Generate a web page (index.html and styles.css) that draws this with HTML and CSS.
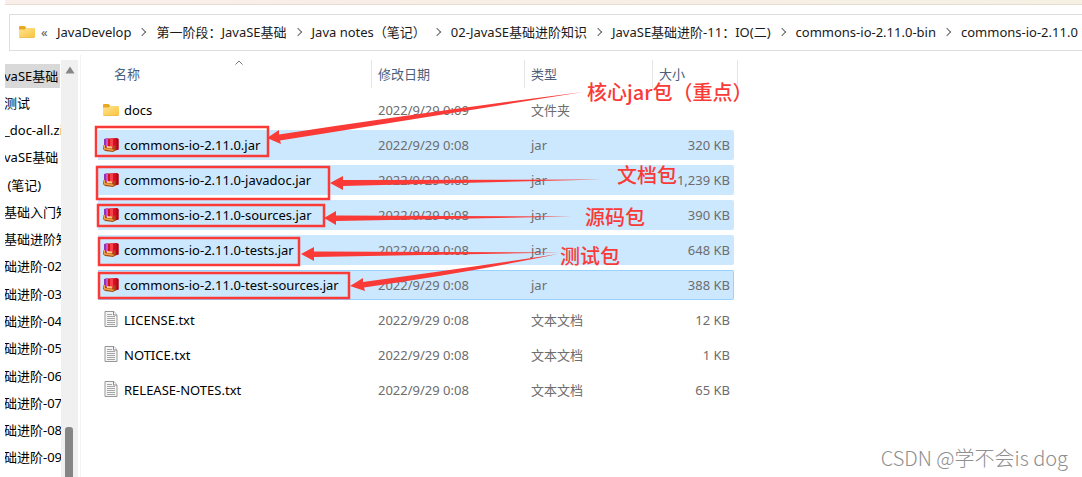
FILE: index.html
```html
<!DOCTYPE html>
<html lang="zh-CN">

<head>
    <meta charset="UTF-8">
    <meta name="viewport" content="width=device-width, initial-scale=1.0">
    <title>commons-io-2.11.0</title>
    <link rel="stylesheet" href="styles.css">
</head>

<body>
    <!-- icons -->
    <svg class="defs" width="0" height="0">
        <defs>
            <linearGradient id="gold" x1="0" y1="0" x2="1" y2="1">
                <stop offset="0" stop-color="#ffe394" />
                <stop offset="1" stop-color="#fbc53c" />
            </linearGradient>
        </defs>
        <symbol id="folder" viewBox="0 0 16 14">
            <path d="M1 1h4.500l2 2H15v3H0V2q0-1 1-1z" fill="#e9a820" />
            <path d="M0 4.500h5.500L7 3h8q1 0 1 1v7.500q0 1-1 1H1q-1 0-1-1z" fill="url(#gold)" />
            <path d="M.5 12.500h15" stroke="#e5ad32" stroke-width=".7" />
        </symbol>
        <symbol id="jar" viewBox="0 0 16 14">
            <path d="M1 1l4-1v10H1z" fill="#8d35b5" />
            <path d="M3 .5L5 0v10H3z" fill="#c558cf" />
            <path d="M5 .5L14 0v12l-9-1z" fill="#d01422" />
            <path d="M7 .5h3V10H7z" fill="#f7404b" />
            <path d="M11 1l3-1 1.500 1v10.500L11 13z" fill="#d90d20" />
            <path d="M13.500 .5l2 .5v10.500L13.500 12z" fill="#a00b18" />
            <path d="M0 7h3v2l7 1V7.500h2.500v5L10 14l-8-1-2-2z" fill="#a94b13" />
            <path d="M0 7h2v3l8.500 1.500V13L1 11.500z" fill="#efa049" />
            <path d="M4 8l5 .5v2L4 10z" fill="#f8cb80" />
        </symbol>
        <symbol id="txt" viewBox="0 0 14 16">
            <path d="M1 .5h9L13 4v11.500H1z" fill="#f5f5f5" stroke="#979797" />
            <path d="M9.500 .5V4H13" fill="#fff" stroke="#888" />
            <path d="M3 3.500h5M3 5.500h8M3 7.500h8M3 9.500h8M3 11.500h8M3 13.500h8" stroke="#a6a6a6" />
        </symbol>
    </svg>

    <div class="topline"></div>
    <nav class="address">
        <svg class="folder"><use href="#folder" /></svg>
        <span class="more">«</span>
        <a href="#">JavaDevelop</a>
        <a href="#">第一阶段：JavaSE基础</a>
        <a href="#">Java notes（笔记）</a>
        <a href="#">02-JavaSE基础进阶知识</a>
        <a href="#">JavaSE基础进阶-11：IO(二)</a>
        <a href="#">commons-io-2.11.0-bin</a>
        <a href="#">commons-io-2.11.0</a>
    </nav>

    <div class="main">
        <ul class="tree">
            <li><a class="active" href="#">vaSE基础</a></li>
            <li><a href="#">测试</a></li>
            <li><a href="#">_doc-all.zip</a></li>
            <li><a href="#">vaSE基础</a></li>
            <li><a href="#">&nbsp;(笔记)</a></li>
            <li><a href="#">基础入门知识</a></li>
            <li><a href="#">基础进阶知识</a></li>
            <li><a href="#">础进阶-02</a></li>
            <li><a href="#">础进阶-03</a></li>
            <li><a href="#">础进阶-04</a></li>
            <li><a href="#">础进阶-05</a></li>
            <li><a href="#">础进阶-06</a></li>
            <li><a href="#">础进阶-07</a></li>
            <li><a href="#">础进阶-08</a></li>
            <li><a href="#">础进阶-09</a></li>
        </ul>
        <div class="scroll">
            <svg class="up" viewBox="0 0 10 8"><path d="M5 .5L9.500 7.500H.5z" fill="#868686" /></svg>
            <div class="thumb"></div>
        </div>

        <div class="files">
            <table>
                <thead>
                    <tr>
                        <th class="name">名称<svg class="sort" viewBox="0 0 8 5"><path d="M.5 4.500L4 1l3.500 3.500" fill="none" stroke="#777" /></svg></th>
                        <th class="date">修改日期</th>
                        <th class="type">类型</th>
                        <th class="size">大小</th>
                    </tr>
                </thead>
                <tbody>
                    <tr>
                        <td class="name"><svg class="folder"><use href="#folder" /></svg>docs</td>
                        <td>2022/9/29 0:09</td>
                        <td>文件夹</td>
                        <td class="size"></td>
                    </tr>
                    <tr class="selected">
                        <td class="name"><svg class="jar"><use href="#jar" /></svg>commons-io-2.11.0.jar</td>
                        <td>2022/9/29 0:08</td>
                        <td>jar</td>
                        <td class="size">320 KB</td>
                    </tr>
                    <tr class="selected">
                        <td class="name"><svg class="jar"><use href="#jar" /></svg>commons-io-2.11.0-javadoc.jar</td>
                        <td>2022/9/29 0:08</td>
                        <td>jar</td>
                        <td class="size">1,239 KB</td>
                    </tr>
                    <tr class="selected">
                        <td class="name"><svg class="jar"><use href="#jar" /></svg>commons-io-2.11.0-sources.jar</td>
                        <td>2022/9/29 0:08</td>
                        <td>jar</td>
                        <td class="size">390 KB</td>
                    </tr>
                    <tr class="selected">
                        <td class="name"><svg class="jar"><use href="#jar" /></svg>commons-io-2.11.0-tests.jar</td>
                        <td>2022/9/29 0:08</td>
                        <td>jar</td>
                        <td class="size">648 KB</td>
                    </tr>
                    <tr class="selected focus">
                        <td class="name"><svg class="jar"><use href="#jar" /></svg>commons-io-2.11.0-test-sources.jar</td>
                        <td>2022/9/29 0:08</td>
                        <td>jar</td>
                        <td class="size">388 KB</td>
                    </tr>
                    <tr>
                        <td class="name"><svg class="txt"><use href="#txt" /></svg>LICENSE.txt</td>
                        <td>2022/9/29 0:08</td>
                        <td>文本文档</td>
                        <td class="size">12 KB</td>
                    </tr>
                    <tr>
                        <td class="name"><svg class="txt"><use href="#txt" /></svg>NOTICE.txt</td>
                        <td>2022/9/29 0:08</td>
                        <td>文本文档</td>
                        <td class="size">1 KB</td>
                    </tr>
                    <tr>
                        <td class="name"><svg class="txt"><use href="#txt" /></svg>RELEASE-NOTES.txt</td>
                        <td>2022/9/29 0:08</td>
                        <td>文本文档</td>
                        <td class="size">65 KB</td>
                    </tr>
                </tbody>
            </table>
        </div>
    </div>

    <!-- red marks over the list -->
    <svg class="marks" width="760" height="320">
        <g fill="none" stroke="#f93a37" stroke-width="2.500">
            <rect x="96" y="127" width="172" height="29" />
            <rect x="97" y="167" width="232" height="32" />
            <rect x="98" y="205" width="226" height="21" />
            <rect x="99" y="238" width="200" height="27" />
            <rect x="99" y="273" width="250" height="25" />
        </g>
        <g fill="#f93a37">
            <path d="M267 138L279 130V134.500Q420 113 583 92Q420 118 280 140.500L281 144z" />
            <path d="M330 183L343 176V180L601 179.500L343 186V190z" />
            <path d="M324 218L336 211V215.500L572 216.500L336 221V225z" />
            <path d="M301 254L314 247V251.500L560 252.500L314 257V261z" />
            <path d="M350 286L363 278V282Q460 269 558 254Q470 272 364 287.500L365 291z" />
        </g>
    </svg>
    <div class="note core">核心jar包（重点）</div>
    <div class="note docs">文档包</div>
    <div class="note source">源码包</div>
    <div class="note test">测试包</div>
    <div class="watermark">CSDN @学不会is dog</div>
</body>

</html>
```
FILE: styles.css
```css
* {
    box-sizing: border-box;
}

body {
    margin: 0;
    min-height: 100vh;
    position: relative;
    display: flex;
    flex-direction: column;
    overflow: hidden;
    background-color: #fff;
    font-family: 'Noto Sans', 'Noto Sans CJK SC', sans-serif;
    font-size: 13px;
    line-height: 18px;
    color: #1a1a1a;
}

a {
    color: inherit;
    text-decoration: none;
}

svg {
    flex: none;
}

.defs {
    position: absolute;
}

.topline {
    height: 5px;
    margin-left: 5px;
    background: linear-gradient(to right, #faeeea, #f6f0e3);
    border-bottom: 1px solid #e6ddd2;
}

.address {
    height: 37px;
    margin: 9px 0 0 9px;
    padding: 0 0 2px 9px;
    border: 1px solid #dedede;
    border-right: 0;
    display: flex;
    align-items: center;
    white-space: nowrap;
    overflow: hidden;
}

.folder {
    width: 16px;
    height: 14px;
}

.more {
    width: 22px;
    padding-left: 6px;
    color: #555;
}

.address a + a::before {
    content: "";
    display: inline-block;
    width: 5px;
    height: 5px;
    margin: 0 11px 2px 8px;
    border: solid #666;
    border-width: 1px 1px 0 0;
    transform: rotate(45deg);
}

.main {
    flex: 1;
    display: flex;
    padding-left: 5px;
}

.tree {
    width: 56px;
    min-height: 409px;
    margin: 11px 0 0;
    padding: 0;
    list-style: none;
    display: grid;
    grid-auto-rows: 1fr;
    align-items: center;
    overflow: hidden;
    white-space: nowrap;
    align-self: flex-start;
}

.tree a {
    display: block;
    line-height: 24px;
    text-indent: -1px;
    color: #000;
}

.tree .active {
    width: 55px;
    background-color: #d9d9d9;
}

.scroll {
    width: 17px;
    margin-top: 9px;
    padding: 6px 4px 0;
    background-color: #f0f0f0;
    display: flex;
    flex-direction: column;
    justify-content: space-between;
}

.up {
    width: 10px;
    height: 8px;
}

.thumb {
    width: 8px;
    height: 50px;
    background-color: #858585;
    border-radius: 3px 3px 0 0;
}

.files {
    flex: 1;
    margin: 4px 0 0 2px;
    padding-left: 17px;
    border-left: 1px solid #f3f3f3;
}

table {
    width: 636px;
    table-layout: fixed;
    border-spacing: 0 5px;
}

th {
    position: relative;
    height: 30px;
    padding: 0 0 2px 6px;
    font-weight: normal;
    text-align: left;
    color: #4c607a;
}

th.name {
    width: 274px;
    padding-left: 16px;
}

th.date {
    width: 153px;
}

th.type {
    width: 128px;
}

th::after {
    content: "";
    position: absolute;
    top: 0;
    right: 0;
    height: 28px;
    border-right: 1px solid #e5e5e5;
}

th.size::after {
    right: -4px;
}

.sort {
    position: absolute;
    top: 0;
    left: 137px;
    width: 8px;
    height: 5px;
}

td {
    height: 30px;
    padding: 0 0 1px 6px;
    color: #6d6d6d;
    white-space: nowrap;
}

td.name {
    padding-left: 5px;
    color: #000;
}

td.name svg {
    margin-right: 5px;
    vertical-align: -2px;
}

.jar {
    width: 16px;
    height: 14px;
}

.txt {
    width: 16px;
    height: 16px;
}

td.size {
    padding-right: 4px;
    text-align: right;
}

.selected td {
    background-color: #cce8ff;
}

.selected td:last-child {
    border-radius: 0 2px 2px 0;
}

.focus td {
    border: solid #99d1ff;
    border-width: 1px 0;
}

.focus td:last-child {
    border-right-width: 1px;
    padding-right: 3px;
}

.marks {
    position: absolute;
    top: 0;
    left: 0;
}

.note {
    position: absolute;
    font-family: 'Noto Sans CJK SC', sans-serif;
    font-size: 20px;
    font-weight: 500;
    line-height: 24px;
    white-space: nowrap;
    color: #f93a37;
}

.core {
    top: 80px;
    left: 587px;
}

.docs {
    top: 163px;
    left: 617px;
}

.source {
    top: 205px;
    left: 585px;
}

.test {
    top: 244px;
    left: 560px;
}

.watermark {
    position: absolute;
    right: 14px;
    bottom: 7px;
    font-family: 'Noto Sans CJK SC', sans-serif;
    font-size: 20px;
    font-weight: 300;
    line-height: 24px;
    color: #8f8f8f;
}
```
